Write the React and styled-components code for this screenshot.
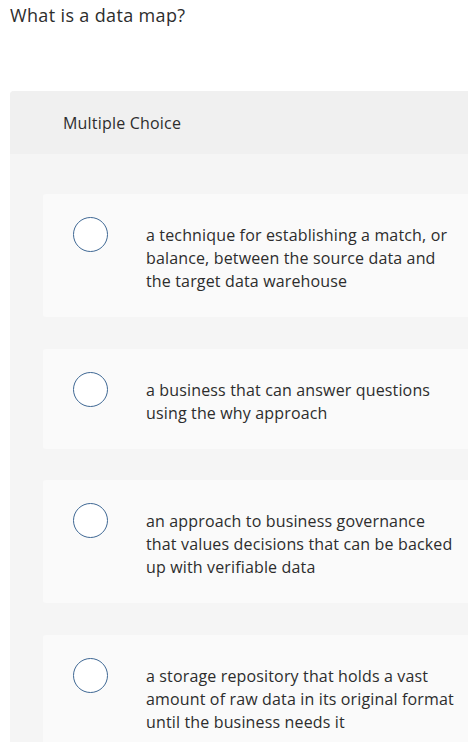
import React from "react";
import styled, { createGlobalStyle } from "styled-components";

const Global = createGlobalStyle`
  html, body { margin: 0; padding: 0; background: #ffffff; }
  body { font-family: "Open Sans", "Lato", sans-serif; color: #2d2d2d; overflow: hidden; }
  * { box-sizing: border-box; }
`;

const Page = styled.div`
  width: 468px;
  padding-left: 10px;
`;

const Title = styled.h1`
  margin: 0;
  padding-top: 4px;
  font-size: 18px;
  letter-spacing: 0.35px;
  font-weight: 400;
  line-height: 22px;
  color: #2d2d2d;
`;

const Panel = styled.section`
  margin-top: 65px;
  margin-right: -20px;
  border-radius: 4px 0 0 0;
  overflow: hidden;
  background: #f5f5f5;
`;

const Header = styled.div`
  height: 63px;
  background: #f0f0f0;
  display: flex;
  align-items: center;
  padding-left: 53px;
  font-size: 16px;
  letter-spacing: 0.2px;
  color: #2d2d2d;
`;

const Body = styled.div`
  padding: 40px 0 40px 33px;
  display: flex;
  flex-direction: column;
  gap: 31.5px;
`;

const Card = styled.label`
  display: flex;
  align-items: flex-start;
  background: #fafafa;
  border-radius: 3px 0 0 3px;
  padding: 23px 0 24px 30px;
`;

const Radio = styled.span`
  flex: none;
  width: 35px;
  height: 35px;
  border-radius: 50%;
  border: 1.5px solid #3f6894;
  background: #ffffff;
`;

const Text = styled.div`
  margin-left: 38px;
  padding-top: 7px;
  width: 311px;
  font-size: 16px;
  letter-spacing: 0.15px;
  line-height: 23px;
  color: #2d2d2d;
`;

const options = [
  "a technique for establishing a match, or balance, between the source data and the target data warehouse",
  "a business that can answer questions using the why approach",
  "an approach to business governance that values decisions that can be backed up with verifiable data",
  "a storage repository that holds a vast amount of raw data in its original format until the business needs it",
];

export default function App() {
  return (
    <Page>
      <Global />
      <Title>What is a data map?</Title>
      <Panel>
        <Header>Multiple Choice</Header>
        <Body>
          {options.map((o) => (
            <Card key={o}>
              <Radio />
              <Text>{o}</Text>
            </Card>
          ))}
        </Body>
      </Panel>
    </Page>
  );
}
